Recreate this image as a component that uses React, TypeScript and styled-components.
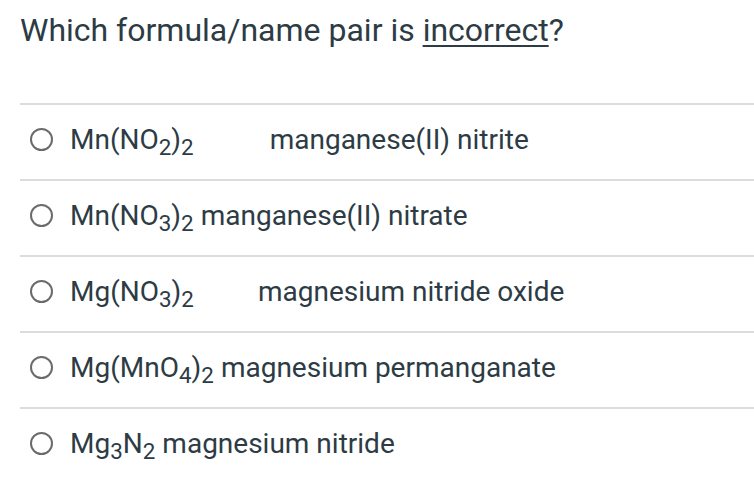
import { FC } from "react";
import styled, { createGlobalStyle } from "styled-components";

const GlobalStyle = createGlobalStyle`
  body {
    margin: 0;
    background: #ffffff;
    font-family: Roboto, "Noto Sans", sans-serif;
    color: #2d3b45;
  }
`;

type Answer = {
  formula: (string | [string])[];
  name: string;
  spacing: number;
};

// [x] marks a subscript part
const answers: Answer[] = [
  { formula: ["Mn(NO", ["2"], ")", ["2"]], name: "manganese(II) nitrite", spacing: 76 },
  { formula: ["Mn(NO", ["3"], ")", ["2"]], name: "manganese(II) nitrate", spacing: 7 },
  { formula: ["Mg(NO", ["3"], ")", ["2"]], name: "magnesium nitride oxide", spacing: 64 },
  { formula: ["Mg(MnO", ["4"], ")", ["2"]], name: "magnesium permanganate", spacing: 7 },
  { formula: ["Mg", ["3"], "N", ["2"]], name: "magnesium nitride", spacing: 7 },
];

const App: FC = () => {
  return (
    <>
      <GlobalStyle />
      <Page>
        <Question>
          Which formula/name pair is <u>incorrect</u>?
        </Question>
        <List>
          {answers.map((a, i) => (
            <Row key={i}>
              <Radio type="radio" name="pair" />
              <Label>
                <span>
                  {a.formula.map((part, j) =>
                    typeof part === "string" ? part : <Sub key={j}>{part[0]}</Sub>
                  )}
                </span>
                <Name $spacing={a.spacing}>{a.name}</Name>
              </Label>
            </Row>
          ))}
        </List>
      </Page>
    </>
  );
};

export default App;

const Page = styled.div`
  padding: 10px 0 0 20px;
`;

const Question = styled.h1`
  margin: 0 0 53px 0;
  font-size: 32px;
  line-height: 40px;
  font-weight: 400;

  u {
    text-decoration-thickness: 2px;
    text-underline-offset: 4px;
  }
`;

const List = styled.div`
  display: flex;
  flex-direction: column;
`;

const Row = styled.label`
  display: flex;
  align-items: center;
  box-sizing: border-box;
  height: 76px;
  padding-bottom: 5px;
  border-top: 2px solid #dcdcdc;
`;

const Radio = styled.input`
  appearance: none;
  margin: 0 17px 0 10px;
  width: 23px;
  height: 23px;
  border: 2px solid #6b6b6b;
  border-radius: 50%;
  background: #fff;
  flex-shrink: 0;
`;

const Label = styled.span`
  display: flex;
  align-items: baseline;
  font-size: 28px;
`;

const Sub = styled.sub`
  font-size: 0.8em;
  vertical-align: -0.25em;
  line-height: 0;
`;

const Name = styled.span<{ $spacing: number }>`
  margin-left: ${(p) => p.$spacing}px;
`;
